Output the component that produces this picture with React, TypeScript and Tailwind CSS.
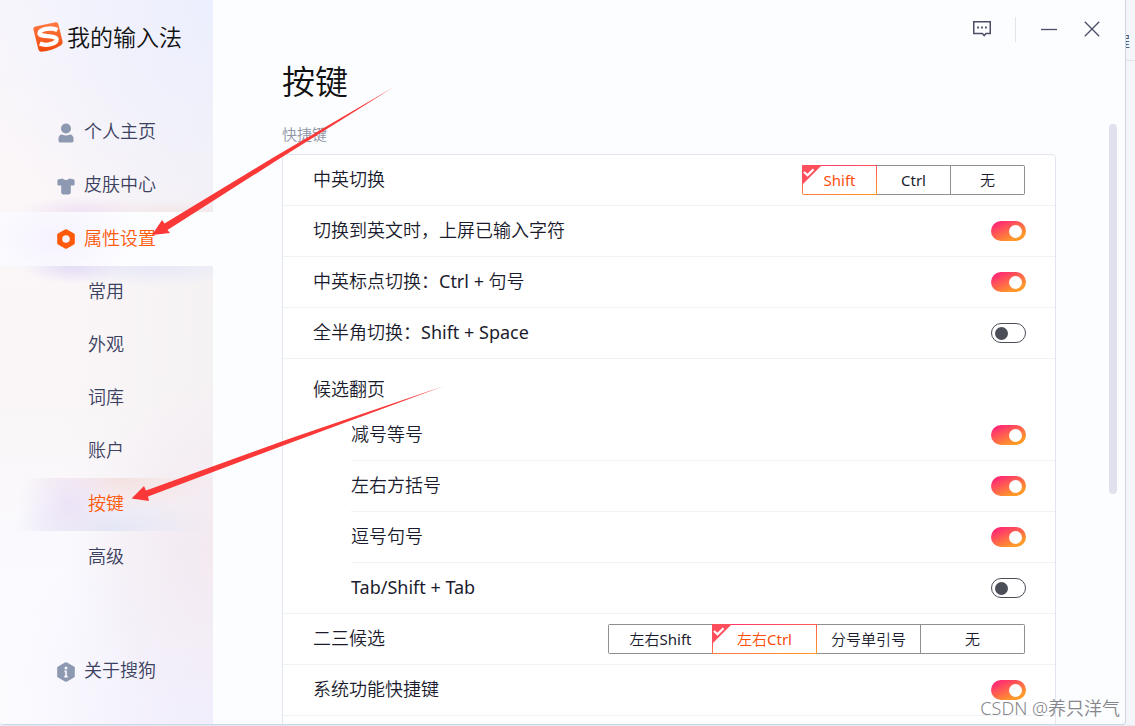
import { useState } from "react";
import type { ReactNode } from "react";
import clsx from "clsx";

function Logo() {
  return (
    <svg viewBox="0 0 30 30" className="size-[30px] flex-none" aria-hidden>
      <defs>
        <linearGradient id="logo" x1="0" y1="0" x2="0" y2="1">
          <stop offset="0" stopColor="#ff7a45" />
          <stop offset="1" stopColor="#f04808" />
        </linearGradient>
      </defs>
      <path
        d="M2.4 4.6 L22.6 0.2 Q24.8 -0.1 25.3 2 L29.6 19.6 Q30 22 27.6 23.6 Q19 29 8.6 29.8 Q6 29.8 5.4 27.6 L0.4 7.4 Q0 5.2 2.4 4.6 Z"
        fill="url(#logo)"
      />
      <path
        d="M24.4 8 C18 5 6.6 7 6.6 11.4 C6.6 15.6 23.6 12.6 23.6 17.6 C23.6 21.8 13 24.4 6.8 21.6"
        fill="none"
        stroke="#fff"
        strokeWidth="4.4"
      />
    </svg>
  );
}

function UserIcon() {
  return (
    <svg viewBox="0 0 18 20" className="h-5 w-[18px]" fill="currentColor" aria-hidden>
      <circle cx="9" cy="5.5" r="5" />
      <path d="M1.5 15.5 C1.5 13 3 11.6 5 11.4 Q9 13.4 13 11.4 C15 11.6 16.5 13 16.5 15.5 V18 Q16.5 19.4 15 19.4 H3 Q1.5 19.4 1.5 18 Z" />
    </svg>
  );
}

function ShirtIcon() {
  return (
    <svg viewBox="0 0 18 20" className="h-5 w-[18px]" fill="currentColor" aria-hidden>
      <path d="M5.6 2.4 Q9 5.4 12.4 2.4 L16.4 3.2 Q17.6 3.6 17.6 4.8 V8.2 Q17.6 9.6 16.2 9.6 H13.8 V16.6 Q13.8 18.4 12 18.4 H6 Q4.2 18.4 4.2 16.6 V9.6 H1.8 Q0.4 9.6 0.4 8.2 V4.8 Q0.4 3.6 1.6 3.2 Z" />
    </svg>
  );
}

function NutIcon() {
  return (
    <svg viewBox="0 0 18 20" className="h-5 w-[18px]" fill="currentColor" aria-hidden>
      <path
        fillRule="evenodd"
        d="M8 0.6 Q9 0 10 0.6 L17 4.4 Q17.8 4.9 17.8 5.8 V14.2 Q17.8 15.1 17 15.6 L10 19.4 Q9 20 8 19.4 L1 15.6 Q0.2 15.1 0.2 14.2 V5.8 Q0.2 4.9 1 4.4 Z M9 6.2 A3.8 3.8 0 1 0 9 13.8 A3.8 3.8 0 1 0 9 6.2 Z"
      />
    </svg>
  );
}

function InfoIcon() {
  return (
    <svg viewBox="0 0 18 20" className="h-5 w-[18px]" aria-hidden>
      <path
        fill="currentColor"
        d="M8 0.6 Q9 0 10 0.6 L17 4.4 Q17.8 4.9 17.8 5.8 V14.2 Q17.8 15.1 17 15.6 L10 19.4 Q9 20 8 19.4 L1 15.6 Q0.2 15.1 0.2 14.2 V5.8 Q0.2 4.9 1 4.4 Z"
      />
      <circle cx="9" cy="6" r="1.5" fill="#f6f4fd" />
      <path d="M7.4 9.3 H9 V14.4 M7.2 14.7 H10.8" stroke="#f6f4fd" strokeWidth="1.7" fill="none" />
    </svg>
  );
}

interface NavItemProps {
  label: string;
  icon: ReactNode;
  active?: boolean;
}

function NavItem({ label, icon, active }: NavItemProps) {
  return (
    <a
      href="#"
      className={clsx(
        "flex items-center gap-[9px] pb-[3px] pl-[57px] text-[18px] leading-6",
        active
          ? "h-[54px] bg-[radial-gradient(ellipse_80px_50px_at_55px_50%,#f6f2fe,#fcfdff)] text-[#ff5a0a]"
          : "h-[53px] text-[#3b4160]"
      )}
    >
      <span className={clsx("pt-[3px]", !active && "text-[#8d99b1]")}>{icon}</span>
      {label}
    </a>
  );
}

const SUB_ITEMS = ["常用", "外观", "词库", "账户", "按键", "高级"];

function Sidebar() {
  return (
    <aside className="flex w-[213px] flex-none flex-col bg-[radial-gradient(ellipse_240px_280px_at_100%_0%,#eceffe,#eceffe00),radial-gradient(ellipse_140px_170px_at_100%_76%,#f3e9f1,#f3e9f100),radial-gradient(ellipse_220px_220px_at_100%_100%,#f1eefd,#f1eefd00),linear-gradient(90deg,#f3f0f200_30%,#f3f0f2b0),linear-gradient(180deg,#f8f6fc_0%,#fbf6f8_25%,#faf6f7_55%,#fafaff_80%,#fcfcff_100%)]">
      <div className="flex h-[106px] items-start gap-1 pt-[22px] pl-[33px]">
        <Logo />
        <span className="text-[23px] leading-[30px] text-[#111]">我的输入法</span>
      </div>
      <nav>
        <NavItem label="个人主页" icon={<UserIcon />} />
        <NavItem label="皮肤中心" icon={<ShirtIcon />} />
        <div className="-mt-4 h-4 bg-[radial-gradient(ellipse_60px_16px_at_80px_100%,#f0e2f3,#f0e2f300),radial-gradient(ellipse_110px_14px_at_170px_100%,#f3e8ea,#f3e8ea00)]" />
        <NavItem label="属性设置" icon={<NutIcon />} active />
        <ul className="bg-[radial-gradient(ellipse_50px_18px_at_72px_0,#e5dcf6,#e5dcf600),radial-gradient(ellipse_110px_20px_at_150px_0,#e6e8f7,#e6e8f700)]">
          {SUB_ITEMS.map((label) => (
            <li key={label}>
              <a
                href="#"
                className={clsx(
                  "flex h-[53px] items-center pb-[3px] pl-[88px] text-[18px] leading-6",
                  label === "按键"
                    ? "bg-[radial-gradient(ellipse_52px_48px_at_70px_50%,#ece3f7,#ece3f700),radial-gradient(ellipse_95px_34px_at_120px_0,#f4e1e0,#f4e1e000),radial-gradient(ellipse_100px_40px_at_110px_100%,#e3e6f5,#e3e6f500)] text-[#ff5a0a]"
                    : "text-[#3b4160]"
                )}
              >
                {label}
              </a>
            </li>
          ))}
        </ul>
      </nav>
      <div className="mt-auto mb-[26px]">
        <NavItem label="关于搜狗" icon={<InfoIcon />} />
      </div>
    </aside>
  );
}

function WindowControls() {
  return (
    <div className="flex h-[60px] flex-none items-start justify-end pt-[17px] pr-[25px] text-[#4a4e68]">
      <button type="button" aria-label="反馈" className="mt-[4px]">
        <svg viewBox="0 0 18 16" className="h-4 w-[18px]" fill="none" stroke="currentColor" strokeWidth="1.5">
          <path d="M0.75 0.75 H17.25 V12.5 H13 L11.2 14.6 L9.4 12.5 H0.75 Z" />
          <path d="M4.2 6.4 H6 M8.1 6.4 H9.9 M12 6.4 H13.8" strokeWidth="2" />
        </svg>
      </button>
      <span className="ml-6 h-[25px] w-px bg-[#e4e5ea]" />
      <button type="button" aria-label="最小化" className="mt-[4px] ml-[25px]">
        <svg viewBox="0 0 16 16" className="size-4" stroke="currentColor" strokeWidth="1.3">
          <path d="M0 8.5 H16" />
        </svg>
      </button>
      <button type="button" aria-label="关闭" className="mt-[4px] ml-[27px]">
        <svg viewBox="0 0 16 16" className="size-4" stroke="currentColor" strokeWidth="1.3">
          <path d="M0.8 0.8 L15.2 15.2 M15.2 0.8 L0.8 15.2" />
        </svg>
      </button>
    </div>
  );
}

function Toggle({ id, on }: { id: string; on: boolean }) {
  const [checked, setChecked] = useState(on);
  return (
    <input
      id={id}
      type="checkbox"
      role="switch"
      checked={checked}
      onChange={(e) => setChecked(e.target.checked)}
      className="flex h-5 w-[35px] flex-none appearance-none items-center rounded-full border border-[#4b4d57] bg-white px-[3px] before:size-[13px] before:rounded-full before:bg-[#4b4d57] checked:justify-end checked:border-0 checked:bg-[linear-gradient(155deg,#ff2d72_15%,#ff9a28_80%)] checked:px-[4px] checked:before:bg-white"
    />
  );
}

interface SegmentedProps {
  name: string;
  options: string[];
  initial: string;
  cell: string;
}

function Segmented({ name, options, initial, cell }: SegmentedProps) {
  const [value, setValue] = useState(initial);
  return (
    <div role="radiogroup" aria-label={name} className="mr-px flex pl-px text-[15px] leading-5">
      {options.map((option) => {
        const selected = option === value;
        return (
          <label
            key={option}
            className={clsx(
              "relative -ml-px flex h-[30px] p-px first:rounded-l-xs last:rounded-r-xs",
              cell,
              selected
                ? "z-10 bg-[linear-gradient(170deg,#ff2d72,#ff6a4a_50%,#ff9a28)] text-[#ff4d0a]"
                : "bg-[#8f8f8f] text-[#1a1c2e]"
            )}
          >
            <input
              type="radio"
              name={name}
              value={option}
              checked={selected}
              onChange={() => setValue(option)}
              className="size-0 appearance-none"
            />
            <span className="flex flex-1 items-center justify-center bg-white">{option}</span>
            {selected && (
              <svg viewBox="0 0 20 20" className="absolute top-0 left-0 size-5" aria-hidden>
                <path d="M0 0 H20 L0 20 Z" fill="#ff4f5c" />
                <path d="M2 7 L5.5 10.3 L11.5 4.3" fill="none" stroke="#fff" strokeWidth="2.2" />
              </svg>
            )}
          </label>
        );
      })}
    </div>
  );
}

interface RowProps {
  label: string;
  id?: string;
  on?: boolean;
  nested?: boolean;
  last?: boolean;
  children?: ReactNode;
}

function Row({ label, id, on = false, nested, last, children }: RowProps) {
  return (
    <div className={clsx(nested && !last && "pl-[68px]")}>
      <div
        className={clsx(
          "flex h-[51px] items-center justify-between border-b border-[#f1f2f5] pr-[29px]",
          nested ? last && "pl-[68px]" : "pl-[30px]"
        )}
      >
        {id ? (
          <label htmlFor={id} className="pb-[2px]">
            {label}
          </label>
        ) : (
          <span className="pb-[2px]">{label}</span>
        )}
        {id ? <Toggle id={id} on={on} /> : children}
      </div>
    </div>
  );
}

function Arrows() {
  return (
    <svg
      viewBox="0 0 460 520"
      className="pointer-events-none absolute top-0 left-0 z-20 h-[520px] w-[460px]"
      fill="#fb3838"
      aria-hidden
    >
      <path d="M152 235 L162 220 L164.5 223.5 L275 156.5 L393 87.5 L275 161.5 L167.5 230 L170 233 Z" />
      <path d="M131.5 498.5 L144 486 L146 490.5 L290 438.5 L444 386 L290 443 L148 496.5 L149 501 Z" />
    </svg>
  );
}

export default function App() {
  return (
    <div className="relative flex h-screen flex-col overflow-hidden bg-[#f3f5f8] font-['Noto_Sans','Noto_Sans_CJK_SC_DemiLight','Noto_Sans_CJK_SC',sans-serif] font-normal">
      <div className="flex min-h-0 flex-1">
        <div className="flex min-w-0 flex-1 overflow-hidden rounded-b-sm border-r border-b border-[#cbd5e4] bg-[#fcfdff]">
          <Sidebar />
          <main className="flex min-w-0 flex-1 flex-col">
            <WindowControls />
            <h1 className="mb-5 flex-none pl-[69px] text-[33px] leading-11 text-[#111]">按键</h1>
            <div className="flex min-h-0 flex-1 pl-[69px]">
              <div className="min-w-0 flex-1 overflow-hidden">
                <h2 className="mb-[10px] text-[15px] leading-5 text-[#8f95a6]">快捷键</h2>
                <div className="rounded border border-[#e3e5ee] bg-white pb-12 text-[18px] leading-6 text-[#1a1c2e]">
                  <Row label="中英切换">
                    <Segmented name="中英切换" options={["Shift", "Ctrl", "无"]} initial="Shift" cell="w-[75px]" />
                  </Row>
                  <Row label="切换到英文时，上屏已输入字符" id="commit" on />
                  <Row label="中英标点切换：Ctrl + 句号" id="punct" on />
                  <Row label="全半角切换：Shift + Space" id="width" />
                  <h3 className="flex h-[51px] items-center pt-2 pl-[30px]">候选翻页</h3>
                  <Row label="减号等号" id="minus" on nested />
                  <Row label="左右方括号" id="bracket" on nested />
                  <Row label="逗号句号" id="comma" on nested />
                  <Row label="Tab/Shift + Tab" id="tab" nested last />
                  <Row label="二三候选">
                    <Segmented
                      name="二三候选"
                      options={["左右Shift", "左右Ctrl", "分号单引号", "无"]}
                      initial="左右Ctrl"
                      cell="w-[105px]"
                    />
                  </Row>
                  <Row label="系统功能快捷键" id="system" on />
                </div>
              </div>
              <div className="w-[69px] flex-none pl-[53px]">
                <div className="h-[370px] w-2 rounded-full bg-[#e0e1ed]" />
              </div>
            </div>
          </main>
        </div>
        {/* sliver of the page behind the window */}
        <div className="w-[9px] flex-none overflow-hidden">
          <div className="flex h-[61px] items-end justify-end border-b border-[#e2e4e8] pr-[5px] pb-[9px] text-[14px] leading-5 text-[#3b4160]">
            程
          </div>
        </div>
      </div>
      <div className="h-px flex-none bg-[#e6ebf3]" />
      <Arrows />
      <p className="absolute right-[15px] bottom-[6px] z-20 text-[18px] leading-6 font-light text-[#85858a]">
        CSDN @养只洋气
      </p>
    </div>
  );
}
